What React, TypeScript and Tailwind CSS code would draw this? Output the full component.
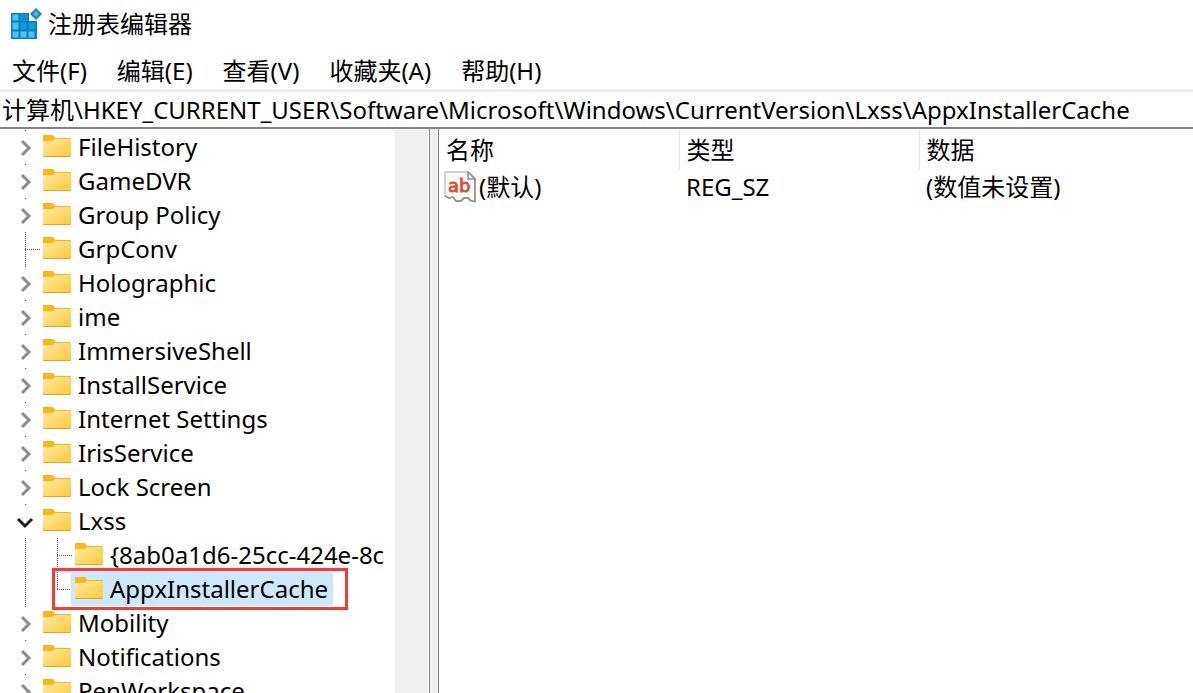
import { FC } from 'react';

type TreeKey = {
  name: string;
  state?: 'closed' | 'open' | 'leaf';
  selected?: boolean;
  children?: TreeKey[];
};

const menus = ['文件(F)', '编辑(E)', '查看(V)', '收藏夹(A)', '帮助(H)'];

const keys: TreeKey[] = [
  { name: 'FileHistory' },
  { name: 'GameDVR' },
  { name: 'Group Policy' },
  { name: 'GrpConv', state: 'leaf' },
  { name: 'Holographic' },
  { name: 'ime' },
  { name: 'ImmersiveShell' },
  { name: 'InstallService' },
  { name: 'Internet Settings' },
  { name: 'IrisService' },
  { name: 'Lock Screen' },
  {
    name: 'Lxss',
    state: 'open',
    children: [
      { name: '{8ab0a1d6-25cc-424e-8c', state: 'leaf' },
      { name: 'AppxInstallerCache', state: 'leaf', selected: true },
    ],
  },
  { name: 'Mobility' },
  { name: 'Notifications' },
  { name: 'PenWorkspace' },
];

const RegeditIcon: FC = () => (
  <svg width="32" height="32" viewBox="0 0 32 32" className="shrink-0" aria-hidden="true">
    <path d="M1 5h18v8h8v18H1z" fill="#0c7dbb" />
    <path d="M2.500 6.500h6v6h-6zM2.500 14.500h6v7h-6zM2.500 23.500h6v6h-6zM10.500 23.500h6v6h-6zM18.500 23.500h6v6h-6z" fill="#45c4f5" />
    <path d="M10 6h8v7h-8z" fill="#1590cf" />
    <path d="M10.500 14.500h6v7h-6zM18.500 14.500h7v7h-7z" fill="#0a9edb" />
    <path d="M26 0l6 6-6 6-6-6z" fill="#1a86bd" />
    <path d="M26 3l3 3-3 3-3-3z" fill="#4db9e8" />
  </svg>
);

const FolderIcon: FC = () => (
  <svg width="28" height="24" viewBox="0 0 28 24" className="shrink-0" aria-hidden="true">
    <defs>
      <linearGradient id="folder" x1="0" y1="0" x2="1" y2="1">
        <stop offset="0" stopColor="#ffe9a6" />
        <stop offset="1" stopColor="#ffc937" />
      </linearGradient>
    </defs>
    <path d="M0 1q0-1 1-1h8q1 0 2 1l1 2h15q1 0 1 1v5H0z" fill="#f9b716" />
    <path d="M0 6h9q1 0 2-1l1-1h16v17q0 1-1 1H1q-1 0-1-1z" fill="url(#folder)" />
    <path d="M0 20.500q0 1.500 1 1.500h26q1 0 1-1.500l-1 .5H1z" fill="#e7a51d" />
  </svg>
);

const StringValueIcon: FC = () => (
  <svg width="32" height="32" viewBox="0 0 32 32" className="shrink-0" aria-hidden="true">
    <path d="M1 1h23l7 7v23l-5-1-3-3-4 1-3 2h-4l-3-4-5 1-3-2z" fill="#f9f9f8" />
    <path d="M1 25V1h23" fill="none" stroke="#c4c4c4" strokeWidth="1.5" />
    <path d="M24 1l7 7v22.500l-4-.5-3-3h-4l-3 3h-5l-3-4-4 1-4-2" fill="none" stroke="#929494" strokeWidth="1.800" />
    <path d="M24 1v7h7z" fill="#fff" stroke="#929494" strokeWidth="1.5" />
    <text
      x="4"
      y="21"
      fill="#db4f2c"
      stroke="#db4f2c"
      strokeWidth="0.8"
      fontFamily="DejaVu Sans, sans-serif"
      fontSize="18"
    >
      ab
    </text>
  </svg>
);

const Connector: FC<{ last?: boolean }> = ({ last }) => (
  <svg width="32" height="34" viewBox="0 0 32 34" className="shrink-0 overflow-visible" aria-hidden="true">
    <g stroke="#606060" strokeDasharray="1 1" fill="none">
      <path d={last ? 'M18.5 0v18' : 'M18.5 0v34'} />
      <path d="M18 17.500h16" />
    </g>
  </svg>
);

const Expander: FC<{ item: TreeKey }> = ({ item }) => (
  <button type="button" aria-label={item.name} aria-expanded={item.state === 'open'} className="w-8 shrink-0">
    <svg width="32" height="34" viewBox="0 0 32 34" fill="none" aria-hidden="true">
      <path d="M18 0h1v1h-1z" fill="#606060" />
      {item.state === 'open' ? (
        <path d="M11 15l7 7 7-7" stroke="#1f1f1f" strokeWidth="3" />
      ) : (
        <path d="M15 11l7 7-7 7" stroke="#8c8c8c" strokeWidth="3" />
      )}
    </svg>
  </button>
);

const TreeRow: FC<{ item: TreeKey; last?: boolean }> = ({ item, last }) => (
  <li role="treeitem" aria-selected={!!item.selected}>
    <div className="relative flex h-[34px]">
      {item.state === 'leaf' ? <Connector last={last} /> : <Expander item={item} />}
      <button
        type="button"
        className={`flex items-center gap-[7px] rounded-xs pl-1 pr-[5px] whitespace-nowrap ${
          item.selected ? 'bg-[#cce8ff]' : ''
        }`}
      >
        <FolderIcon />
        <span>{item.name}</span>
      </button>
      {item.selected && (
        <div className="pointer-events-none absolute -top-1 left-[13px] h-[42px] w-[296px] border-3 border-[#fc3838]" />
      )}
    </div>
    {item.children && (
      <div className="flex">
        <svg width="32" height="68" viewBox="0 0 32 68" className="shrink-0" aria-hidden="true">
          <path d="M18.5 0v68" stroke="#606060" strokeDasharray="1 1" />
        </svg>
        <ul role="group">
          {item.children.map((child, i) => (
            <TreeRow key={child.name} item={child} last={i === item.children!.length - 1} />
          ))}
        </ul>
      </div>
    )}
  </li>
);

const App: FC = () => {
  return (
    <div className="flex h-screen flex-col overflow-hidden bg-white font-['Noto_Sans','Noto_Sans_CJK_SC',sans-serif] text-2xl leading-8 text-black">
      <header className="flex h-12 shrink-0 items-center gap-1.5 px-2.5">
        <RegeditIcon />
        <h1>注册表编辑器</h1>
      </header>

      <nav className="flex h-[41px] shrink-0 items-center gap-[30px] px-3 pt-1">
        {menus.map((menu) => (
          <button key={menu} type="button" className="whitespace-nowrap">
            {menu}
          </button>
        ))}
      </nav>

      <input
        type="text"
        aria-label="地址"
        defaultValue="计算机\HKEY_CURRENT_USER\Software\Microsoft\Windows\CurrentVersion\Lxss\AppxInstallerCache"
        className="h-10 w-full shrink-0 border-t-3 border-b-2 border-t-[#efefef] border-b-[#828287] px-0.5 pb-0.5 outline-none"
      />

      <main className="flex min-h-0 flex-1">
        <aside className="flex w-[430px] shrink-0 border-r border-[#828287] pr-px">
          <ul role="tree" className="min-w-0 flex-1 overflow-hidden pt-px pl-[7px]">
            {keys.map((item) => (
              <TreeRow key={item.name} item={item} />
            ))}
          </ul>
          <div className="mt-px w-[33px] shrink-0 bg-[#efefef]" />
        </aside>
        <div className="w-2 shrink-0 cursor-col-resize bg-[#efefef]" />

        <section className="min-w-0 flex-1 overflow-hidden border-l border-[#828287] pt-px">
          <table className="w-full table-fixed border-collapse text-left">
            <thead>
              <tr className="h-10">
                <th className="w-[240px] border-r border-[#e5e5e5] pl-[7px] font-normal">名称</th>
                <th className="w-[240px] border-r border-[#e5e5e5] pl-[7px] font-normal">类型</th>
                <th className="pl-[7px] font-normal">数据</th>
              </tr>
            </thead>
            <tbody>
              <tr className="h-[34px]">
                <td className="pl-[5px]">
                  <div className="flex items-center gap-[3px]">
                    <StringValueIcon />
                    <span>(默认)</span>
                  </div>
                </td>
                <td className="pl-[7px]">REG_SZ</td>
                <td className="pl-[7px]">(数值未设置)</td>
              </tr>
            </tbody>
          </table>
        </section>
      </main>
    </div>
  );
};

export default App;
